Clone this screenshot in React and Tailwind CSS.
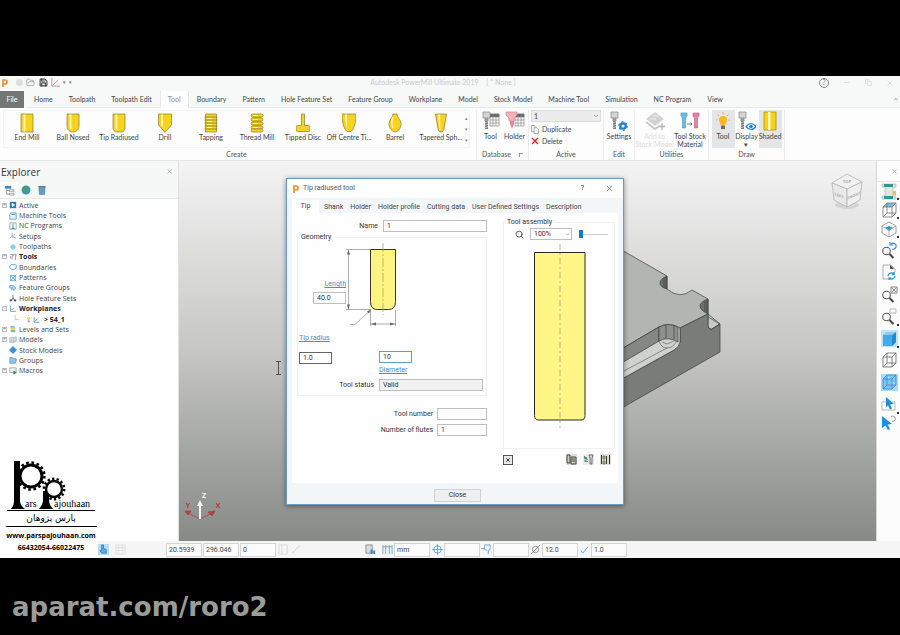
import React from "react";
import clsx from "clsx";
import { X, Minus, Copy, ChevronDown, ChevronUp, Search, FolderOpen, Save } from "lucide-react";

const Y = "#f6d31c";
const S = "#8a7a3a";

/* ---------- ribbon drawings ---------- */

function ToolShape({ kind }) {
  const body = { fill: Y, stroke: S, strokeWidth: 0.7 };
  const shine = <path d="M3.5 1.5h2v15h-2z" fill="#fff3a8" />;
  const shapes = {
    end: <><path d="M1 1h12v18H1z" {...body} /><path d="M3.500 1.500h2v17h-2z" fill="#fff3a8" /></>,
    ball: <><path d="M1 1h12v12c0 8-12 8-12 0z" {...body} />{shine}</>,
    tip: <><path d="M1 1h12v14c0 2-1.500 4-4 4H5c-2.500 0-4-2-4-4z" {...body} />{shine}</>,
    drill: <><path d="M0.500 1h13v11L7 19.500 0.500 12z" {...body} /><path d="M3 1.500h2v13l-2-2z" fill="#fff3a8" /></>,
    tap: (
      <>
        <path d="M1.500 1h11v18h-11z" {...body} />
        <path d="M.5 4h13M.5 7h13M.5 10h13M.5 13h13M.5 16h13" stroke="#8a7a20" strokeWidth=".8" />
        <path d="M3 5.500h5M3 8.500h5M3 11.500h5M3 14.500h5" stroke="#fff3a8" />
      </>
    ),
    thread: (
      <>
        <path d="M2.500 1h9v18h-9z" fill={Y} />
        {[2.5, 6.5, 10.5, 14.5, 17.5].map((y) => (
          <rect key={y} x="1" y={y - 1.500} width="12" height="3" rx="1.500" {...body} />
        ))}
        <path d="M3 2.500h5M3 6.500h5M3 10.500h5M3 14.500h5" stroke="#fff3a8" />
      </>
    ),
    disc: <path d="M5.500 1h3v11.500h4a1.500 1.500 0 0 1 1.500 1.500v3a1.500 1.500 0 0 1-1.500 1.500h-11A1.500 1.500 0 0 1 0 17v-3a1.500 1.500 0 0 1 1.500-1.500h4z" {...body} />,
    off: <><path d="M0 1h14c0 6-1 14-5 17.500H5C1 15 0 7 0 1z" {...body} /><path d="M3 1.500h2v14C4 13 3 7 3 1.500z" fill="#fff3a8" /></>,
    barrel: <><path d="M5 1h4c0 4 4 5 4 10s-4 8-6 8-6-3-6-8 4-6 4-10z" {...body} /><path d="M5 4c-1 3-2 6 0 11" fill="none" stroke="#fff3a8" strokeWidth="1.500" /></>,
    tapered: <><path d="M1.500 1h11L10 16c-.5 4-5.500 4-6 0z" {...body} /><path d="M4 1.500h2l.5 15h-1z" fill="#fff3a8" /></>,
  };
  return <svg viewBox="0 0 14 20" className="h-[20px] w-[14px]" aria-hidden="true">{shapes[kind]}</svg>;
}

function Spindle({ x = 0 }) {
  return (
    <g transform={`translate(${x} 0)`}>
      <path d="M0 1h7v6H0z" fill="#d5d5d5" stroke="#888" strokeWidth=".7" />
      <path d="M1.500 7h4v3h-4z" fill="#9a9a9a" />
      <path d="M2 10h3v8H2z" fill="#777" />
      <path d="M2 12l3-1.500M2 14.500L5 13M2 17l3-1.500" stroke="#ddd" strokeWidth=".8" />
    </g>
  );
}

function MiniTable({ x }) {
  return (
    <g fill="none" stroke="#8b8b8b" strokeWidth=".7">
      <path d={`M${x} 3h9v12h-9z`} fill="#fff" />
      <path d={`M${x} 3h9v3h-9z`} fill="#5f5f5f" />
      <path d={`M${x} 9h9M${x} 12h9M${x + 3} 3v12M${x + 6} 3v12`} />
    </g>
  );
}

const bigIcons = {
  dbTool: <svg viewBox="0 0 18 20" className="h-[20px] w-[18px]"><MiniTable x={8} /><Spindle x={1} /></svg>,
  dbHolder: (
    <svg viewBox="0 0 20 20" className="h-[20px] w-[20px]">
      <MiniTable x={10} />
      <path d="M1 1h11v3L9 7v3H4V7L1 4z" fill="#f3b3bd" stroke="#d98594" strokeWidth=".7" />
      <path d="M5 10h4v3l-2 5-2-5z" fill="#e58a9a" />
    </svg>
  ),
  settings: (
    <svg viewBox="0 0 18 20" className="h-[20px] w-[18px]">
      <Spindle x={1} />
      <circle cx="13" cy="15" r="2.700" fill="none" stroke="#1d7fd0" strokeWidth="2.200" />
      <circle cx="13" cy="15" r="4.200" fill="none" stroke="#1d7fd0" strokeWidth="1.200" strokeDasharray="2.200 2.200" />
    </svg>
  ),
  addStock: (
    <svg viewBox="0 0 20 20" className="h-[20px] w-[20px]">
      <path d="M10 1l9 7-9 7-9-7z" fill="#d2d2d2" />
      <path d="M1 11l9 7 4-3" fill="none" stroke="#c6c6c6" strokeWidth="1.800" />
      <path d="M5 8h6M8 5h6" stroke="#eee" />
      <path d="M17 12v7M13.500 15.500h7" stroke="#b5b5b5" strokeWidth="1.300" />
    </svg>
  ),
  stockMat: (
    <svg viewBox="0 0 20 20" className="h-[20px] w-[20px]">
      <path d="M1 2h6v3L5.500 7v10h-3V7L1 5z" fill="#6dbbea" stroke="#4a90bd" strokeWidth=".6" />
      <path d="M13 2h6v3l-1.500 2v10h-3V7L13 5z" fill="#ee7fa2" stroke="#b95d7c" strokeWidth=".6" />
      <path d="M7 13h5M10.500 11.500L12 13l-1.500 1.500" stroke="#555" fill="none" strokeWidth=".8" />
    </svg>
  ),
  bulb: (
    <svg viewBox="0 0 16 20" className="h-[20px] w-[16px]">
      <path d="M8 5a4 4 0 0 1 4 4c0 2-1.500 3-1.700 5H5.700C5.500 12 4 11 4 9a4 4 0 0 1 4-4z" fill="#fcb81a" />
      <path d="M6 14.500h4v3.500H6z" fill="#7a6a4a" />
      <path d="M8 1v2M2.500 3.500L4 5M13.500 3.500L12 5M1 9h1.500M13.500 9H15" stroke="#f3a33c" strokeWidth="1" />
    </svg>
  ),
  display: (
    <svg viewBox="0 0 18 20" className="h-[20px] w-[18px]">
      <Spindle x={1} />
      <path d="M8 15.500q5-6 10 0q-5 6-10 0z" fill="#fff" stroke="#1d7fd0" strokeWidth="1.200" />
      <circle cx="13" cy="15.500" r="1.800" fill="#1d7fd0" />
    </svg>
  ),
  shaded: (
    <svg viewBox="0 0 14 20" className="h-[20px] w-[14px]">
      <path d="M1 1h12v18H1z" fill="#f8d30f" stroke="#a8921f" strokeWidth=".8" />
      <path d="M5 1h2.500v18H5z" fill="#fff7c8" />
    </svg>
  ),
};

/* ---------- title bar and tabs ---------- */

function LogoP() {
  return (
    <svg viewBox="0 0 6 8" className="h-[8px] w-[6px] shrink-0" aria-hidden="true">
      <path d="M1 8V1h2a2 2 0 0 1 0 4H1.500" fill="none" stroke="#e8912c" strokeWidth="1.700" />
    </svg>
  );
}

function TitleBar() {
  return (
    <header className="flex h-[15px] items-center bg-[#f7f8f8] pb-[2px] pl-[2px] pr-[6px] font-['Lato','Open_Sans',sans-serif] text-[#777]">
      <LogoP />
      <span className="ml-[8px] size-[7px] rounded-full bg-[#dcdfe0]" />
      <FolderOpen className="ml-[3px] size-[9px]" strokeWidth={1.5} />
      <Save className="ml-[4px] size-[9px] text-[#444]" strokeWidth={3} />
      <svg viewBox="0 0 10 10" className="ml-[3px] size-[9px]"><path d="M1 0v9h9" fill="none" stroke="#999" /><path d="M1 9l7-7" stroke="#d99" /></svg>
      <span className="ml-[3px] text-[5px]">▾</span>
      <span className="ml-[3px] text-[5px]">▾</span>
      <div className="flex-1 pr-[5px] text-center text-[#c9caca]"><span className="mr-[6px]">Autodesk PowerMill Ultimate 2019</span> [ * None ]</div>
      <button aria-label="Help" className="flex size-[10px] items-center justify-center rounded-full border border-[#888] text-[7px] leading-none">?</button>
      <button aria-label="Minimise" className="ml-[14px] text-[#ccc]"><Minus className="size-[7px]" /></button>
      <button aria-label="Restore" className="ml-[15px] text-[#ccc]"><Copy className="size-[7px]" /></button>
      <button aria-label="Close window" className="ml-[14px] text-[#ccc]"><X className="size-[8px]" /></button>
    </header>
  );
}

const tabs = ["Home", "Toolpath", "Toolpath Edit", "Tool", "Boundary", "Pattern", "Hole Feature Set", "Feature Group", "Workplane", "Model", "Stock Model", "Machine Tool", "Simulation", "NC Program", "View"];

function TabStrip() {
  return (
    <nav className="flex h-[17px] items-stretch bg-[#f7f8f8] font-['Lato','Open_Sans',sans-serif] text-[#444]">
      <button className="mr-[2px] w-[24px] bg-[#757676] text-white">File</button>
      {tabs.map((t) => (
        <button
          key={t}
          className={clsx(
            "whitespace-nowrap border-b",
            t === "Tool" ? "border-x border-b-white border-x-[#e6e7e7] bg-white px-[7px] text-[#8a8a8a]" : "border-[#e9eaea] px-[8px]"
          )}
        >
          {t}
        </button>
      ))}
      <div className="flex flex-1 items-center justify-end border-b border-[#e9eaea] pr-[1px]"><ChevronUp className="size-[6px]" /></div>
    </nav>
  );
}

/* ---------- ribbon ---------- */

const gallery = [
  ["end", "End Mill"], ["ball", "Ball Nosed"], ["tip", "Tip Radiused"], ["drill", "Drill"], ["tap", "Tapping"],
  ["thread", "Thread Mill"], ["disc", "Tipped Disc"], ["off", "Off Centre Ti..."], ["barrel", "Barrel"], ["tapered", "Tapered Sph..."],
];

function Group({ title, className, children, corner }) {
  return (
    <section className={clsx("flex flex-col border-r border-[#ececec]", className)}>
      <div className="flex h-[38px] justify-center">{children}</div>
      <h2 className="flex items-center justify-center gap-[8px] pt-[2px] text-[#555]">{title}{corner && <span className="size-[4px] border-l border-t border-[#999]" />}</h2>
    </section>
  );
}

function BigButton({ icon, label, className }) {
  return (
    <button className={clsx("flex flex-col items-center pt-[1px] leading-[8px]", className)}>
      {bigIcons[icon]}
      <span className="pt-[1px]">{label}</span>
    </button>
  );
}

function Ribbon() {
  return (
    <div className="flex h-[53px] border-b border-[#e3e4e4] bg-[#fdfdfd] pt-[2px] font-['Lato','Open_Sans',sans-serif] text-[#444]">
      <Group title="Create" className="w-[477px] pl-[3px] pr-[6px]">
        <div className="flex w-full border border-[#f4f4f4]">
          {gallery.map(([kind, label]) => (
            <button key={kind} className="flex w-[46px] shrink-0 flex-col items-center whitespace-nowrap pt-[2px] leading-[8px]">
              <ToolShape kind={kind} />
              {label}
            </button>
          ))}
          <div className="flex flex-1 flex-col items-center justify-around py-[2px] text-[5px] leading-[6px] text-[#888]">
            <span>▴</span><span>▾</span><span>▾</span>
          </div>
        </div>
      </Group>
      <Group title="Database" className="w-[52px]" corner>
        <BigButton icon="dbTool" label="Tool" className="w-[24px]" />
        <BigButton icon="dbHolder" label="Holder" className="w-[24px]" />
      </Group>
      <Group title="Active" className="w-[75px]">
        <div className="flex w-full flex-col px-[2px]">
          <div className="relative flex">
            <select aria-label="Active tool" className="h-[12px] w-full appearance-none border border-[#dcdcdc] bg-[#ececec] pl-[2px]"><option>1</option></select>
            <ChevronDown className="pointer-events-none absolute right-[2px] top-[3px] size-[6px]" />
          </div>
          <button className="mt-[1px] flex h-[12px] items-center gap-[3px]">
            <svg viewBox="0 0 9 10" className="h-[9px] w-[8px]" fill="#fff" stroke="#888" strokeWidth=".8"><path d="M.5.5h4l1 1v6h-5z" /><path d="M3.500 3h3l2 1.500v5h-5z" /></svg>
            Duplicate
          </button>
          <button className="flex h-[12px] items-center gap-[3px]">
            <svg viewBox="0 0 8 8" className="size-[8px]"><path d="M1 1l6 6M7 1L1 7" stroke="#d4202c" strokeWidth="1.300" /></svg>
            Delete
          </button>
        </div>
      </Group>
      <Group title="Edit" className="w-[31px]"><BigButton icon="settings" label="Settings" /></Group>
      <Group title="Utilities" className="w-[74px]">
        <BigButton icon="addStock" label={<>Add to<br />Stock Model</>} className="w-[37px] whitespace-nowrap text-[#dcdcdc]" />
        <BigButton icon="stockMat" label={<>Tool Stock<br />Material</>} className="w-[34px] whitespace-nowrap" />
      </Group>
      <Group title="Draw" className="w-[76px]">
        <BigButton icon="bulb" label="Tool" className="w-[23px] bg-[#e3e5e7]" />
        <BigButton icon="display" label={<>Display<br />▾</>} className="w-[24px]" />
        <BigButton icon="shaded" label="Shaded" className="w-[23px] bg-[#e3e5e7]" />
      </Group>
    </div>
  );
}

/* ---------- explorer ---------- */

const treeIcons = {
  active: <><path d="M1 1h8v8H1z" fill="#2678bd" /><path d="M4 3l3 2-3 2z" fill="#fff" stroke="#fff" /></>,
  machine: <><path d="M2 1h7v8H1V3z" fill="#e8f4fa" stroke="#5a9bbd" /><path d="M3 3h5" stroke="#2d7fa8" /></>,
  nc: <><path d="M1 1h8v8H1z" fill="#f3f8fa" stroke="#8aa" /><path d="M5 2v6M3 8h4" stroke="#478" /></>,
  setups: <path d="M1 8l3-3 1 3M4 5V1M4 5l4-3M5 6l4 2" fill="none" stroke="#9aa6ad" />,
  toolpaths: <path d="M5 1l4 4-4 4-4-4z" fill="#7dd0e6" />,
  tools: <path d="M1 2h4v2H4v4M5 2h4L8 5v4M2 4v3" fill="none" stroke="#888" />,
  boundaries: <path d="M3 2h4a2 2 0 0 1 2 3c0 2-2 3-4 3S1 7 1 5s1-3 2-3z" fill="none" stroke="#3f98cc" />,
  patterns: <path d="M2 2h6v6H2zM1 1l8 8M9 1L1 9" fill="none" stroke="#49a4d2" />,
  feature: <path d="M1 2h4l4 3-4 3V5H1zM3 5v3" fill="#b9ddef" stroke="#4f92bb" strokeWidth=".8" />,
  hole: <><path d="M5 1v4M2 9l3-4 3 4" fill="none" stroke="#456" /><path d="M1 7h3v2H1zM6 7h3v2H6z" fill="#35586e" /></>,
  workplanes: <><path d="M2 1v7h7" fill="none" stroke="#4a9ac2" /><path d="M3 6l3-2" stroke="#d55" /></>,
  levels: <><path d="M2 1h5v3H2z" fill="#6ec0e0" /><path d="M2 3h6v3H2z" fill="#f0d45a" /><path d="M2 6h6v3H2z" fill="#7cc58a" /></>,
  models: <path d="M1 2h5v6H1zM6 2l3-1v6L6 8M3 4v3" fill="#dde2e4" stroke="#9aa" strokeWidth=".8" />,
  stock: <path d="M5 0l5 5-5 5-5-5z" fill="#3f92cf" />,
  groups: <path d="M1 2h3l1 1h3v1h1.500L8 9H1z" fill="#8ec4ea" stroke="#4d8cbc" strokeWidth=".8" />,
  macros: <><path d="M1 1h8v6H1z" fill="#eef3f0" stroke="#888" strokeWidth=".8" /><path d="M6 5l3 2-3 2z" fill="#2c9a57" stroke="#2c9a57" /></>,
};

const tree = [
  ["active", "Active", "+"], ["machine", "Machine Tools"], ["nc", "NC Programs"], ["setups", "Setups"], ["toolpaths", "Toolpaths"],
  ["tools", "Tools", "+", true], ["boundaries", "Boundaries"], ["patterns", "Patterns"], ["feature", "Feature Groups"], ["hole", "Hole Feature Sets"],
  ["workplanes", "Workplanes", "-", true], ["child", "> 54_1", "", true], ["levels", "Levels and Sets", "+"], ["models", "Models", "+"],
  ["stock", "Stock Models"], ["groups", "Groups"], ["macros", "Macros", "+"],
];

function Explorer() {
  return (
    <aside className="flex w-[179px] shrink-0 flex-col border-r border-[#e2e2e2] bg-white text-[#444]">
      <div className="flex h-[21px] items-center justify-between bg-[#f6f7f7] pl-[1px] pr-[5px]">
        <h1 className="text-[10px] leading-[14px] text-[#333]">Explorer</h1>
        <button aria-label="Close explorer" className="text-[#999]"><X className="size-[7px]" /></button>
      </div>
      <div className="flex h-[17px] items-center border-b border-[#e6e7e7] bg-[#f6f7f7]">
        <button aria-label="Tree view" className="flex h-full w-[18px] items-center justify-center bg-white">
          <svg viewBox="0 0 12 12" className="size-[11px]"><path d="M1 1h7v3H1z" fill="#3d85bd" /><path d="M3 4v6h3M3 6h3" fill="none" stroke="#777" strokeWidth=".8" /><path d="M6 5h5v2H6zM6 9h5v2H6z" fill="#fff" stroke="#888" strokeWidth=".8" /></svg>
        </button>
        <button aria-label="Web" className="ml-[3px]"><svg viewBox="0 0 10 10" className="size-[10px]"><circle cx="5" cy="5" r="4.500" fill="#4794ba" /><path d="M1 4l3-3 3 1-2 3 2 2-2 2-1-3z" fill="#39a56a" /><path d="M8 3l1 3-2 1z" fill="#39a56a" /></svg></button>
        <button aria-label="Recycle bin" className="ml-[7px]"><svg viewBox="0 0 9 11" className="h-[10px] w-[8px]"><path d="M1 2h7l-.5 8.500h-6z" fill="#5f9fd0" stroke="#55738a" strokeWidth=".6" /><path d="M.5 1.500h8" stroke="#666" /></svg></button>
      </div>
      <ul className="mt-[1px] grid h-[176px] auto-rows-fr">
        {tree.map(([icon, label, box, bold]) => (
          <li key={label} className={clsx("flex items-center pl-[2px] leading-[9px]", bold && "font-bold text-[#222]")}>
            <span className="flex w-[7px] items-center">
              {box && <span className="flex size-[5px] items-center justify-center border border-[#bbb] text-[5px] font-normal leading-none text-[#777]">{box}</span>}
            </span>
            {icon === "child" ? (
              <svg viewBox="0 0 34 10" className="h-[9px] w-[34px]">
                <path d="M5 0v5h4" fill="none" stroke="#bbb" strokeWidth=".8" />
                <circle cx="20" cy="4" r="2" fill="#ecdf7a" /><path d="M19 6h2v2h-2z" fill="#999" /><path d="M16 2l1 1M24 2l-1 1M20 0v1" stroke="#bbb" />
                <path d="M26 2v6h6" fill="none" stroke="#4a9ac2" /><path d="M27 7l3-3" stroke="#d55" />
              </svg>
            ) : (
              <svg viewBox="0 0 10 10" className="mr-[2px] size-[8px]">{treeIcons[icon]}</svg>
            )}
            <span className={icon === "child" ? "ml-px" : ""}>{label}</span>
          </li>
        ))}
      </ul>
    </aside>
  );
}

/* ---------- watermark of the training company ---------- */

function Gear({ cx, cy, r, w, teeth }) {
  const c = 2 * Math.PI * (r + w / 2 + 1);
  const d = c / teeth / 2;
  return (
    <g fill="none" stroke="#000">
      <circle cx={cx} cy={cy} r={r} strokeWidth={w} />
      <circle cx={cx} cy={cy} r={r + w / 2 + 1} strokeWidth="2.400" strokeDasharray={`${d} ${d}`} />
    </g>
  );
}

function CompanyMark() {
  return (
    <div className="absolute bottom-0 left-0 flex w-[98px] flex-col items-center bg-white pb-[4px] pl-[4px] text-black">
      <svg viewBox="4 456 94 55" className="h-[55px] w-[94px]" role="img" aria-label="Pars Pajouhaan">
        <path d="M14 462h6v39c0 5 2 6 5 9H11c2-3 3-4 3-9zM43 492h6v9c0 4 2 6 4 9H39c2-3 4-5 4-9z" />
        <circle cx="31" cy="477" r="11" fill="#fff" />
        <circle cx="54" cy="490" r="8" fill="#fff" />
        <Gear cx={31} cy={477} r={11} w={3} teeth={16} />
        <Gear cx={54} cy={490} r={8} w={2.400} teeth={14} />
        <text x="25" y="508" fontFamily="Liberation Serif, serif" fontSize="10">ars</text>
        <text x="54" y="508" fontFamily="Liberation Serif, serif" fontSize="10">ajouhaan</text>
      </svg>
      <div dir="rtl" lang="fa" className="w-[88px] border-t border-black text-center font-['DejaVu_Sans',sans-serif] text-[9px] leading-[14px]">پارس پژوهان</div>
      <div className="mt-px w-[91px] border-t border-black pt-[3px] text-center text-[7px] font-bold leading-[12px]">www.parspajouhaan.com</div>
      <div className="text-[7px] font-bold leading-[12px]">66432054-66022475</div>
    </div>
  );
}

/* ---------- 3D view ---------- */

function Part() {
  return (
    <svg viewBox="620 246 104 165" className="absolute left-[441px] top-[85px] h-[165px] w-[104px]" stroke="#3c3e3c" strokeWidth=".7" strokeLinejoin="round" aria-hidden="true">
      <path d="M620 249L667 276V289Q680 300 692 290L708 299V314L680 328L659 327L620 350z" fill="#b3b5b3" />
      <path d="M667 276V289Q660 287 660 283T667 276z" fill="#6e706e" />
      <path d="M664 278v10M666 277v12" />
      <path d="M708 299V314Q700 310 700 306T708 299z" fill="#6e706e" />
      <path d="M705 301v11M707 300v13" />
      <path d="M708 314v14l4 1 8-5z" fill="#c7c9c7" />
      <path d="M708 317l12 7-8 5" fill="none" />
      <path d="M680 328L708 314V327L711 330L720 324V352L620 409V380L674 350Q680 346 680 342z" fill="#7a7c7a" />
      <path d="M620 350L659 327Q668 322 678 327L680 328V342Q680 346 674 350L620 380z" fill="#d0d2d0" />
      <path d="M620 350L659 327V341L620 364z" fill="#858785" />
      <path d="M659 327Q668 322 678 327V342Q668 336 659 341z" fill="#8e908e" />
      <path d="M666 325v13M674 325v14" />
      <path d="M659 341q2 7 8 7t9-6M620 373L667 348M662 342l5 2 7-3" fill="none" strokeWidth=".5" />
    </svg>
  );
}

function ViewCube() {
  return (
    <svg viewBox="0 0 34 38" className="absolute right-[12px] top-[11px] h-[38px] w-[34px]" stroke="#b5b5b5" strokeWidth=".8" aria-label="View cube" role="img">
      <ellipse cx="17" cy="33" rx="12" ry="4" fill="#d3d4d3" stroke="none" />
      <path d="M17 2l15 8-15 7L2 11z" fill="#f1f1f1" />
      <path d="M2 11l15 6v18L4 28z" fill="#e9e9e9" />
      <path d="M17 17l15-7-2 18-13 7z" fill="#efefef" />
      <g stroke="none" fill="#aaa" fontSize="4" fontWeight="bold" textAnchor="middle">
        <text x="17" y="11">TOP</text>
        <text transform="translate(9 25) skewY(22)">LEFT</text>
        <text transform="translate(24 25) skewY(-24)">FRONT</text>
      </g>
    </svg>
  );
}

function Triad() {
  return (
    <svg viewBox="0 0 40 34" className="absolute bottom-[17px] left-[4px] h-[34px] w-[40px]" aria-hidden="true">
      <path d="M17 29L3 22M2 21l6 0-3 4zM17 29L31 22M32 21l-7 1 4 4z" stroke="#a83f3f" fill="#b44" strokeWidth=".8" />
      <path d="M16 13h2v16h-2zM17 10l3 6h-6z" fill="#f4f4f4" />
      <g fontSize="7" fontWeight="bold" textAnchor="middle">
        <text x="5" y="18" fill="#c03333">Y</text><text x="35" y="18" fill="#c03333">X</text><text x="21" y="8" fill="#f4f4f4">Z</text>
      </g>
    </svg>
  );
}

const field = "h-[12px] border px-[3px] text-[7px] leading-[9px] text-[#333] outline-none";
const plain = "border-[#bdbfc0] bg-white";
const link = "text-[#4a8fcb] underline";

function TipDiagram() {
  return (
    <svg viewBox="346 243 54 87" className="h-[87px] w-[54px]" aria-hidden="true">
      <path d="M370.500 250.500h25v52q0 8-7 8h-11q-7 0-7-8z" fill="#fff482" stroke="#34342a" />
      <g fill="none" stroke="#999" strokeWidth=".8">
        <path d="M383 244v72" stroke="#a9a670" strokeDasharray="9 2 2 2" />
        <path d="M348.500 251v59M346 250.500h24M346 310.500h25M370.500 311v16M395.500 311v16M371 325h25M350 325.500h5l15-14" />
      </g>
      <path d="M348.500 250.500l1.500 5h-3zM348.500 310.500l1.500-5h-3zM371 325l5-1.500v3zM395 325l-5-1.500v3zM371 310.500l-4 2 2 2z" fill="#666" />
    </svg>
  );
}

function Dialog() {
  return (
    <form onSubmit={(e) => e.preventDefault()} aria-label="Tip radiused tool" className="absolute left-[107px] top-[17px] flex w-[338px] flex-col border border-[#6a9cc4] bg-[#f3f6f8] px-[5px] font-['Roboto','Open_Sans',sans-serif] text-[#333] shadow-[0_1px_5px_rgba(0,0,0,0.45)]">
      <div className="-mx-[5px] flex h-[19px] items-center bg-white pl-[6px] pr-[9px]">
        <LogoP />
        <span className="ml-[4px] flex-1 text-[#555]">Tip radiused tool</span>
        <button type="button" aria-label="Help">?</button>
        <button type="button" aria-label="Close dialog" className="ml-[21px]"><X className="size-[9px]" strokeWidth={1.5} /></button>
      </div>
      <div className="flex h-[15px] items-end whitespace-nowrap pt-[2px] text-[#444]">
        <button type="button" className="mr-[5px] h-full w-[27px] bg-white">Tip</button>
        {["Shank", "Holder", "Holder profile", "Cutting data", "User Defined Settings", "Description"].map((t) => (
          <button type="button" key={t} className="mr-[7px] h-[12px]">{t}</button>
        ))}
      </div>
      <div className="flex h-[270px] justify-between bg-[#fefefe] pl-[5px] pr-[3px] pt-[5px]">
        <div className="w-[190px] pt-[2px]">
          <label className="flex items-center justify-end gap-[5px]">Name<input defaultValue="1" className={clsx(field, plain, "w-[104px]")} /></label>
          <fieldset className="mt-[1px] h-[163px] border border-[#f0f0f0]">
            <legend className="ml-[2px] px-[1px]">Geometry</legend>
            <div className="flex pl-[15px]">
              <label className="flex w-[33px] flex-col items-end pt-[38px]">
                <span className={link}>Length</span>
                <input defaultValue="40.0" className={clsx(field, plain, "mt-[3px] w-[33px]")} />
              </label>
              <TipDiagram />
            </div>
            <div className="grid grid-cols-[80px_1fr] pl-[1px] pt-[5px]">
              <label htmlFor="tip-radius" className={clsx(link, "col-span-2")}>Tip radius</label>
              <input id="tip-radius" defaultValue="1.0" className={clsx(field, "mt-[9px] w-[33px] border-[#666] bg-white")} />
              <div className="flex flex-col pt-[8px]">
                <input id="diameter" defaultValue="10" className={clsx(field, "w-[33px] border-[#5d9bd0] bg-white")} />
                <label htmlFor="diameter" className={clsx(link, "mt-[3px]")}>Diameter</label>
              </div>
            </div>
            <label className="flex items-center justify-end gap-[5px] pr-[3px] pt-[4px]">Tool status<input readOnly defaultValue="Valid" className={clsx(field, "w-[104px] border-[#bdbfc0] bg-[#f1f1f1]")} /></label>
          </fieldset>
          <label className="mt-[12px] flex items-center justify-end gap-[4px]">Tool number<input className={clsx(field, plain, "w-[50px]")} /></label>
          <label className="mt-[4px] flex items-center justify-end gap-[4px]">Number of flutes<input defaultValue="1" className={clsx(field, plain, "w-[50px]")} /></label>
        </div>
        <div className="w-[112px]">
          <fieldset className="h-[231px] border border-[#f0f0f0]">
            <legend className="ml-[2px] px-[1px]">Tool assembly</legend>
            <div className="flex items-center pl-[11px] pt-[1px]">
              <Search className="size-[9px]" strokeWidth={2} />
              <div className="relative ml-[6px] flex">
                <select aria-label="Zoom" className={clsx(field, plain, "w-[42px] appearance-none")}><option>100%</option></select>
                <ChevronDown className="pointer-events-none absolute right-[2px] top-[4px] size-[5px]" />
              </div>
              <input
                type="range"
                defaultValue="0"
                aria-label="Zoom level"
                className="ml-[7px] h-[9px] w-[29px] appearance-none bg-transparent [&::-webkit-slider-runnable-track]:h-px [&::-webkit-slider-runnable-track]:bg-[#ccc] [&::-webkit-slider-thumb]:-mt-[4px] [&::-webkit-slider-thumb]:h-[8px] [&::-webkit-slider-thumb]:w-[4px] [&::-webkit-slider-thumb]:appearance-none [&::-webkit-slider-thumb]:bg-[#1878cf]"
              />
            </div>
            <svg viewBox="0 0 54 184" className="ml-[29px] mt-[4px] h-[184px] w-[54px]" aria-hidden="true">
              <path d="M1.500 8.500h50.500v163q0 4.500-4 4.500h-42.500q-4 0-4-4.500z" fill="#fff688" stroke="#29291f" />
              <path d="M27 0v184" stroke="#a8a676" strokeWidth=".8" strokeDasharray="6 3 2 3" />
            </svg>
          </fieldset>
          <div className="flex items-center pt-[5px] text-[#333]">
            <button type="button" aria-label="Clear" className="flex size-[10px] items-center justify-center border border-[#555] bg-[#e8eaec]"><X className="size-[6px]" strokeWidth={4} /></button>
            <div className="ml-auto flex gap-[6px] pr-[4px]">
              <button type="button" aria-label="Copy tool"><svg viewBox="0 0 11 11" className="size-[11px]"><path d="M0 0h11v11H0z" fill="#e2e2dc" /><path d="M1 1h3v8H1zM5 3h5v7H5z" fill="#cfcdb0" stroke="#444" /><path d="M6 5h3M6 7h3" stroke="#444" /></svg></button>
              <button type="button" aria-label="Add holder"><svg viewBox="0 0 11 11" className="size-[11px]"><path d="M0 0h11v11H0z" fill="#e9ebeb" /><path d="M6 1h4L9 4v6H7V4zM1 2l3 3M1 7l4-2" fill="#ddd" stroke="#555" strokeWidth=".8" /><path d="M1 3h3v2H1zM2 7h3v1H2z" fill="#3a9a80" /></svg></button>
              <button type="button" aria-label="Add to database"><svg viewBox="0 0 11 11" className="size-[11px]"><path d="M0 0h11v11H0z" fill="#dfdfd6" /><path d="M1.500 1v9M9.500 1v9M6.500 2v8" stroke="#333" /><path d="M3 2h2v3H3zM3 7h2v3H3z" fill="#b9b46a" stroke="#555" strokeWidth=".6" /></svg></button>
            </div>
          </div>
        </div>
      </div>
      <div className="flex h-[21px] items-center justify-center pl-[5px] pt-[3px]">
        <button className="h-[13px] w-[47px] border border-[#d0d2d3] bg-[#efefef] leading-[10px]">Close</button>
      </div>
    </form>
  );
}

/* ---------- view toolbar ---------- */

const blue = "#2b94dc";
const magnifier = <><circle cx="5.500" cy="9" r="3.800" fill="none" stroke="#555" strokeWidth="1.100" /><path d="M8.500 12l4 4" stroke="#444" strokeWidth="2" /></>;
const cubeLines = "M2 5h9v10H2zM2 5l4-4h9v10l-4 4M11 5l4-4M6 1v10h9M6 11l-4 4";

const viewTools = [
  ["Clipping", "h-[19px]", <><path d="M1 1h14v3h-3v9h3v3H1v-3h3V4H1z" fill="#e4e4e0" stroke="#aaa" strokeWidth=".6" /><path d="M3 1h9v3H3zM3 13h9v3H3z" fill="#2f9a94" /><path d="M12 8h3v4h-3z" fill="#f1b84c" /></>, true],
  ["View from top", "h-[19px]", <><path d="M2 5l4-4h9l-4 4z" fill="#72bce8" /><path d={cubeLines} fill="none" stroke="#777" strokeWidth=".8" /></>, true],
  ["Isometric", "h-[19px]", <><path d="M8 1l7 4v7l-7 4-7-4V5z" fill="#fafafa" stroke="#888" strokeWidth=".8" /><path d="M4 7l4-2 4 2-4 3z" fill={blue} /><path d="M1 5l7 4 7-4M8 9v7" fill="none" stroke="#999" strokeWidth=".7" /></>, true],
  ["Zoom previous", "h-[22px]", <>{magnifier}<path d="M10 2a3 3 0 1 1 1 5M9 0v3h3" fill="none" stroke={blue} strokeWidth="1.200" /></>],
  ["Refresh", "h-[22px]", <><path d="M2 1h8l4 4v3M2 1v14h5" fill="none" stroke="#999" strokeWidth=".8" /><path d="M9 1v4h4z" fill="#444" /><path d="M7 12a3.500 3.500 0 0 1 6-2M14 12a3.500 3.500 0 0 1-6 2M13 8v2.500h-2M8 16v-2h2" fill="none" stroke={blue} strokeWidth="1.300" /></>],
  ["Zoom to fit", "h-[22px]", <>{magnifier}<path d="M10 1h6v6h-6zM11 2l4 4M15 2l-4 4" fill="none" stroke="#777" strokeWidth=".9" /></>],
  ["Zoom box", "h-[22px]", <>{magnifier}<path d="M9 1h6v4H9z" fill="none" stroke="#aaa" strokeWidth=".8" /></>, true],
  ["Shaded view", "h-[22px]", <><path d="M0 0h17v17H0z" fill="#bfe3f8" /><path d="M2 5l4-3h9v10l-4 4H2z" fill="#45a9e8" /><path d="M11 6l4-4v10l-4 4z" fill="#1f8bd3" /><path d="M2 5l4-3h9l-4 3z" fill="#8bcef5" /></>, true],
  ["Wireframe", "h-[22px]", <path d={cubeLines} fill="none" stroke="#666" strokeWidth=".8" />],
  ["Translucent", "h-[22px]", <><path d="M0 0h17v17H0z" fill="#a5dafa" /><path d={cubeLines} fill="#7cc6f2" stroke="#3b8cc4" strokeWidth=".8" /></>],
  ["Select box", "h-[22px]", <><path d="M5 6H1v8h13V6h-3" fill="none" stroke="#bbb" /><path d="M5 1l8 7-4 .5 2 4-2 1-2-4-2 2z" fill="#1a8fe0" /></>, true],
  ["Select previous", "h-[14px]", <><path d="M1 2l10 8-4.500.5 2.500 4.500-2 1-2.500-4.500L1 14z" fill="#1a8fe0" /><path d="M10 3a2.500 2.500 0 1 1 1 4" fill="none" stroke="#999" /></>],
];

function ViewToolbar() {
  return (
    <aside className="flex w-[24px] shrink-0 flex-col border-l border-[#d8d8d8] bg-[#fcfcfc]">
      <div className="flex h-[21px] items-center justify-end border-b border-[#e4e4e4] pr-[2px] text-[#888]"><X className="size-[7px]" /></div>
      {viewTools.map(([label, h, art, more]) => (
        <button key={label} aria-label={label} className={clsx("relative flex shrink-0 items-center pl-[4px]", h)}>
          <svg viewBox="0 0 17 17" className="size-[17px]">{art}</svg>
          {more && <span className="absolute bottom-[1px] right-[1px] size-[2px] bg-[#333]" />}
        </button>
      ))}
    </aside>
  );
}

/* ---------- status bar ---------- */

function StatusIcon({ children, className }) {
  return <svg viewBox="0 0 12 12" className={clsx("size-[11px] shrink-0", className)} fill="none" stroke="#5b9fc8" strokeWidth=".9" aria-hidden="true">{children}</svg>;
}

function StatusField({ label, value, className }) {
  return <input aria-label={label} readOnly value={value} className={clsx("h-[14px] w-[36px] shrink-0 border border-[#d3d5d3] bg-[#fbfcfb] px-[2px] text-[7px] leading-[9px] text-[#444]", className)} />;
}

function StatusBar() {
  return (
    <footer className="flex h-[17px] items-center bg-[#f4f5f4] pl-[98px] font-['Roboto','Open_Sans',sans-serif]">
      <span className="flex size-[11px] items-center justify-center bg-[#b5dcf4]"><StatusIcon><path d="M4 1v6H2l2 3h5V6L6 5V1z" fill="#5aaae0" stroke="#3a7fb4" /></StatusIcon></span>
      <StatusIcon className="ml-[6px] opacity-30"><path d="M1 1h10v10H1zM1 4h10M1 7h10M4 1v10M8 1v10" stroke="#aaa" /></StatusIcon>
      <StatusField label="X" value="20.5939" className="ml-[40px]" />
      <StatusField label="Y" value="296.046" className="ml-[1px]" />
      <StatusField label="Z" value="0" className="ml-[1px]" />
      <StatusIcon className="ml-[2px] opacity-40"><path d="M1 1h9v10H1zM4 1v10" stroke="#aaa" /></StatusIcon>
      <StatusIcon className="ml-[2px] opacity-50"><path d="M1 10l4-3 1-2 4-3" stroke="#aaa" /></StatusIcon>
      <StatusIcon className="ml-[63px]"><path d="M1 1h7v9H1z" fill="#d8dcdc" stroke="#888" /><path d="M7 6v5M10 7v4" stroke="#2a83c0" strokeWidth="2" /></StatusIcon>
      <StatusIcon className="ml-[6px]"><path d="M1 3h10M1 1v10M4 1v10M8 1v10M11 1v10" /></StatusIcon>
      <StatusField label="Units" value="mm" className="ml-[1px]" />
      <StatusIcon className="ml-[2px]"><circle cx="6" cy="6" r="4" /><path d="M6 0v12M0 6h12" /></StatusIcon>
      <StatusField label="Tolerance" value="" className="ml-[1px]" />
      <StatusIcon className="ml-[1px]"><path d="M4 1h6v5l-2 1v4M0 5h4M4 1v5l3 1" /></StatusIcon>
      <StatusField label="Thickness" value="" className="ml-[1px]" />
      <StatusIcon className="ml-[1px]"><circle cx="6" cy="6" r="3.500" stroke="#888" /><path d="M1 11L11 1" stroke="#888" /></StatusIcon>
      <StatusField label="Tool diameter" value="12.0" className="ml-[1px]" />
      <StatusIcon className="ml-[1px]"><path d="M2 7l2 3 6-7" /></StatusIcon>
      <StatusField label="Tip radius of the tool" value="1.0" className="ml-[1px]" />
    </footer>
  );
}

export default function App() {
  return (
    <div className="flex min-h-screen flex-col bg-black pt-[76px] font-['Open_Sans','Noto_Sans',sans-serif] text-[7px] leading-[9px]">
      <div className="relative flex flex-1 flex-col overflow-hidden">
        <TitleBar />
        <TabStrip />
        <Ribbon />
        <div className="flex min-h-[380px] flex-1">
          <Explorer />
          <main className="relative min-w-0 flex-1 overflow-hidden bg-linear-to-b from-[#f3f4f3] via-[#c6c7c5] to-[#888a87]">
            <Part />
            <ViewCube />
            <Triad />
            <svg viewBox="0 0 7 14" className="absolute left-[96px] top-[200px] h-[14px] w-[7px]" aria-hidden="true"><path d="M1 .5h5M1 13.500h5M3.500 1v12" stroke="#444" strokeWidth=".9" /></svg>
            <Dialog />
          </main>
          <ViewToolbar />
        </div>
        <StatusBar />
        <CompanyMark />
      </div>
      <div className="flex h-[77px] items-center pl-[12px] pt-[20px] font-['DejaVu_Sans',sans-serif] text-[26px] font-bold leading-[30px] text-[#9b9b9b]">aparat.com/roro2</div>
    </div>
  );
}
